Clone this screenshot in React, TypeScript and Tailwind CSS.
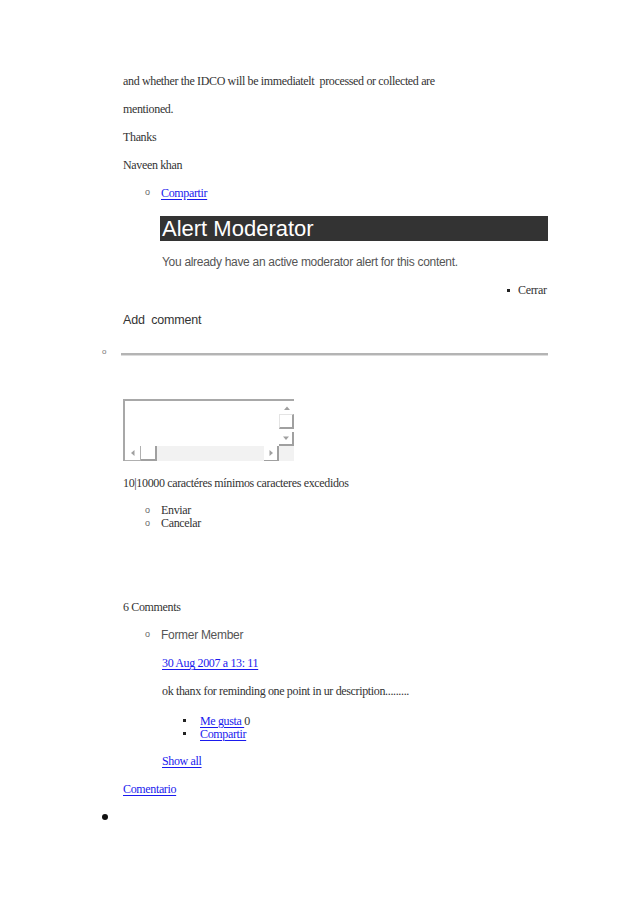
import React from "react";

const serif = "font-['Liberation_Serif','Times_New_Roman',serif]";
const sans = "font-['Liberation_Sans',Arial,sans-serif]";

function Row({ children, className = "" }: { children?: React.ReactNode; className?: string }) {
  return <div className={`h-[28px] flex items-center ${className}`}>{children}</div>;
}

function Circle() {
  return <span className={`${sans} text-[9px] text-[#666] w-[16px] inline-block tracking-normal`}>o</span>;
}

function Square() {
  return <span className="inline-block w-[3px] h-[3px] bg-[#222]" />;
}

function Arrow({ dir }: { dir: "up" | "down" | "left" | "right" }) {
  const pts: Record<string, string> = {
    up: "1,6 4,2.5 7,6",
    down: "1,2.5 4,6 7,2.5",
    left: "5.5,1 2,4 5.5,7",
    right: "2.5,1 6,4 2.5,7",
  };
  return (
    <svg width="8" height="8" viewBox="0 0 8 8">
      <polygon points={pts[dir]} fill="#a0a0a0" />
    </svg>
  );
}

function TextArea() {
  return (
    <div className="w-[171px] h-[62px] border-2 border-[#a8a8a8] border-r-0 border-b-0 flex flex-col bg-white">
      <div className="flex flex-1">
        <div className="flex-1" />
        <div className="w-[15px] flex flex-col bg-white">
          <div className="h-[13px] flex items-center justify-center bg-white">
            <Arrow dir="up" />
          </div>
          <div className="h-[15px] bg-white border-r-2 border-b-2 border-[#a0a0a0] border-l border-t border-l-[#e4e4e4] border-t-[#e4e4e4]" />
          <div className="flex-1 bg-white" />
          <div className="h-[14px] flex items-center justify-center bg-white border-r-2 border-b-2 border-[#a0a0a0]">
            <Arrow dir="down" />
          </div>
        </div>
      </div>
      <div className="h-[15px] flex bg-[#f2f2f2]">
        <div className="w-[16px] flex items-center justify-center bg-white border-r border-b border-[#b0b0b0]">
          <Arrow dir="left" />
        </div>
        <div className="w-[16px] bg-white border-r-2 border-b-2 border-[#a0a0a0]" />
        <div className="flex-1" />
        <div className="w-[15px] flex items-center justify-center bg-white border-r-2 border-b border-[#a0a0a0]">
          <Arrow dir="right" />
        </div>
        <div className="w-[15px] bg-[#f2f2f2]" />
      </div>
    </div>
  );
}

export default function App() {
  const link = "text-[#1a1aee] underline decoration-1 underline-offset-[2px]";
  return (
    <div className={`w-[638px] h-[902px] bg-white text-[#333] ${serif} text-[12px] tracking-[-0.35px] pt-[67px]`}>
      <div className="pl-[123px]">
        <Row>and whether the IDCO will be immediatelt&nbsp; processed or collected are</Row>
        <Row>mentioned.</Row>
        <Row>Thanks</Row>
        <Row>Naveen khan</Row>
        <Row className="pl-[22px]">
          <Circle />
          <a className={link}>Compartir</a>
        </Row>
      </div>

      <div className="pl-[160px] pr-[90px] mt-[9px]">
        <div className={`h-[25px] bg-[#333] text-white ${sans} text-[22px] tracking-normal leading-[25px] pl-[2px]`}>
          Alert Moderator
        </div>
      </div>
      <Row className={`pl-[162px] mt-[7px] ${sans} text-[#555] text-[12px] tracking-[-0.3px]`}>
        You already have an active moderator alert for this content.
      </Row>
      <Row className="pl-[507px]">
        <Square />
        <span className="ml-[8px]">Cerrar</span>
      </Row>
      <Row className={`pl-[123px] mt-[2px] ${sans} text-[12.5px] tracking-[-0.2px] whitespace-pre`}>Add  comment</Row>

      <div className="h-[26px] mt-[6px] flex items-center pl-[102px] pr-[90px]">
        <span className={`${sans} text-[8px] text-[#777] w-[19px] leading-none mt-[-2px]`}>o</span>
        <div className="flex-1 h-[3px] bg-[#b4b4b4] border-b border-[#dcdcdc] mt-[2px]" />
      </div>

      <div className="pl-[123px] mt-[33px]">
        <TextArea />
      </div>

      <Row className="pl-[123px] mt-[8px]">10|10000 caractéres mínimos caracteres excedidos</Row>

      <div className="pl-[145px] mt-[7px] leading-[13px]">
        <div className="flex items-center h-[13px]">
          <Circle />
          <span>Enviar</span>
        </div>
        <div className="flex items-center h-[13px]">
          <Circle />
          <span>Cancelar</span>
        </div>
      </div>

      <Row className="pl-[123px] mt-[63px] h-[27px]">6 Comments</Row>
      <Row className="pl-[145px]">
        <Circle />
        <span className={`${sans} text-[12px] tracking-[-0.3px] text-[#555]`}>Former Member</span>
      </Row>
      <Row className="pl-[162px]">
        <a className={link}>30 Aug 2007 a 13: 11</a>
      </Row>
      <Row className="pl-[162px]">ok thanx for reminding one point in ur description.........</Row>

      <div className="pl-[183px] mt-[9px]">
        <div className="flex items-center h-[13px]">
          <Square />
          <a className={`${link} ml-[14px] whitespace-pre`}>Me gusta </a>
          <span>0</span>
        </div>
        <div className="flex items-center h-[13px]">
          <Square />
          <a className={`${link} ml-[14px]`}>Compartir</a>
        </div>
      </div>

      <Row className="pl-[162px] mt-[7px]">
        <a className={link}>Show all</a>
      </Row>
      <Row className="pl-[123px]">
        <a className={link}>Comentario</a>
      </Row>
      <Row className="pl-[102px]">
        <span className="inline-block w-[6px] h-[6px] rounded-full bg-[#111]" />
      </Row>
    </div>
  );
}
